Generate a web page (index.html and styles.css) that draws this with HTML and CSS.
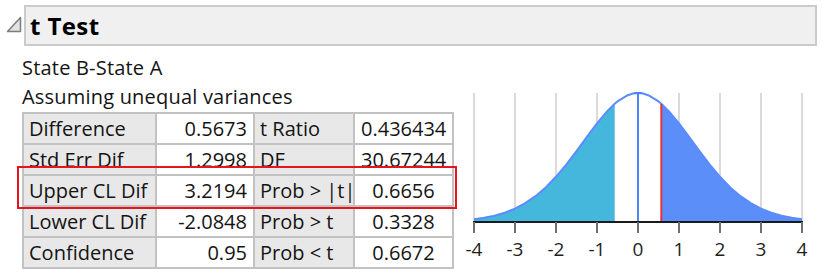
FILE: index.html
```html
<!DOCTYPE html>
<html>
<head>
<meta charset="utf-8">
<link rel="stylesheet" href="styles.css">
</head>
<body>
<div class="report">
  <div class="header">
    <svg class="disclosure" width="16" height="17" viewBox="0 0 16 17"><path d="M1.5 15.5 L14.5 1.5 L14.5 15.5 Z" fill="#e2e2e2" stroke="#7c7c7c" stroke-width="1.5" stroke-linejoin="round"/></svg>
    <div class="title-box"><span class="title">t Test</span></div>
  </div>
  <div class="content">
    <div class="left">
      <div class="line">State B-State A</div>
      <div class="line">Assuming unequal variances</div>
      <div class="table-wrap">
        <table class="stats">
          <colgroup><col class="c1"><col class="c2"><col class="c3"><col class="c4"></colgroup>
          <tr><td class="lab">Difference</td><td class="num">0.5673</td><td class="lab">t Ratio</td><td class="num2">0.436434</td></tr>
          <tr><td class="lab">Std Err Dif</td><td class="num">1.2998</td><td class="lab">DF</td><td class="num2">30.67244</td></tr>
          <tr><td class="lab">Upper CL Dif</td><td class="num">3.2194</td><td class="lab">Prob &gt; |t|</td><td class="num2">0.6656</td></tr>
          <tr><td class="lab">Lower CL Dif</td><td class="num">-2.0848</td><td class="lab">Prob &gt; t</td><td class="num2">0.3328</td></tr>
          <tr><td class="lab">Confidence</td><td class="num">0.95</td><td class="lab">Prob &lt; t</td><td class="num2">0.6672</td></tr>
        </table>
        <div class="highlight"></div>
      </div>
    </div>
    <svg class="chart" width="360" height="180" viewBox="460 85 360 180">
      <g stroke="#dadada" stroke-width="2">
        <line x1="474" y1="93" x2="474" y2="222"/>
        <line x1="515" y1="93" x2="515" y2="222"/>
        <line x1="556" y1="93" x2="556" y2="222"/>
        <line x1="597" y1="93" x2="597" y2="222"/>
        <line x1="638" y1="93" x2="638" y2="222"/>
        <line x1="679" y1="93" x2="679" y2="222"/>
        <line x1="720" y1="93" x2="720" y2="222"/>
        <line x1="761" y1="93" x2="761" y2="222"/>
        <line x1="802" y1="93" x2="802" y2="222"/>
      </g>
      <path fill="#45b7dd" d="M474,222 L474,219.2 L484.25,217.8 L494.5,215.7 L504.75,212.7 L515,208.7 L525.25,203.2 L535.5,196.2 L545.75,187.4 L556,176.8 L566.25,164.6 L576.5,151.1 L586.75,137.1 L597,123.4 L607.25,111.2 L614.7,103.7 L614.7,222 Z"/>
      <path fill="#5b8ef9" d="M661.3,222 L661.3,103.7 L668.75,111.2 L679,123.4 L689.25,137.1 L699.5,151.1 L709.75,164.6 L720,176.8 L730.25,187.4 L740.5,196.2 L750.75,203.2 L761,208.7 L771.25,212.7 L781.5,215.7 L791.75,217.8 L802,219.2 L802,222 Z"/>
      <polyline fill="none" stroke="#5b8cff" stroke-width="2" stroke-linejoin="round" points="474,219.2 484.25,217.8 494.5,215.7 504.75,212.7 515,208.7 525.25,203.2 535.5,196.2 545.75,187.4 556,176.8 566.25,164.6 576.5,151.1 586.75,137.1 597,123.4 607.25,111.2 614.7,103.7 617.5,101.4 627.75,95.2 632.9,93.5 638,93 643.1,93.5 648.25,95.2 658.5,101.4 661.3,103.7 668.75,111.2 679,123.4 689.25,137.1 699.5,151.1 709.75,164.6 720,176.8 730.25,187.4 740.5,196.2 750.75,203.2 761,208.7 771.25,212.7 781.5,215.7 791.75,217.8 802,219.2"/>
      <line x1="638" y1="93" x2="638" y2="222" stroke="#4f86f7" stroke-width="2"/>
      <line x1="634" y1="93" x2="642" y2="93" stroke="#4f86f7" stroke-width="2"/>
      <line x1="661.3" y1="104" x2="661.3" y2="222" stroke="#e8323c" stroke-width="2"/>
      <line x1="473" y1="222" x2="803" y2="222" stroke="#1a1a1a" stroke-width="2"/>
      <g stroke="#707070" stroke-width="2">
        <line x1="474" y1="222" x2="474" y2="233"/>
        <line x1="515" y1="222" x2="515" y2="233"/>
        <line x1="556" y1="222" x2="556" y2="233"/>
        <line x1="597" y1="222" x2="597" y2="233"/>
        <line x1="638" y1="222" x2="638" y2="233"/>
        <line x1="679" y1="222" x2="679" y2="233"/>
        <line x1="720" y1="222" x2="720" y2="233"/>
        <line x1="761" y1="222" x2="761" y2="233"/>
        <line x1="802" y1="222" x2="802" y2="233"/>
      </g>
      <g class="ticklabels" text-anchor="middle">
        <text x="474" y="256">-4</text>
        <text x="515" y="256">-3</text>
        <text x="556" y="256">-2</text>
        <text x="597" y="256">-1</text>
        <text x="638" y="256">0</text>
        <text x="679" y="256">1</text>
        <text x="720" y="256">2</text>
        <text x="761" y="256">3</text>
        <text x="802" y="256">4</text>
      </g>
    </svg>
  </div>
</div>
</body>
</html>
```

FILE: styles.css
```css
html, body {
  margin: 0;
  padding: 0;
  background: #ffffff;
}

body {
  font-family: "Open Sans", "Liberation Sans", sans-serif;
  font-size: 20px;
  color: #141414;
  width: 825px;
  height: 280px;
  overflow: hidden;
}

.header {
  display: flex;
  align-items: flex-start;
  padding: 5px 8px 0 6px;
}

.disclosure {
  flex: none;
  margin-top: 11px;
}

.title-box {
  flex: 1;
  margin-left: 2px;
  height: 41px;
  box-sizing: border-box;
  border: 2px solid #cbcbcb;
  background: #f0f0f0;
  padding-left: 4px;
  line-height: 37px;
}

.title {
  font-weight: 700;
  font-size: 24px;
  letter-spacing: 0.4px;
  color: #000;
}

.content {
  display: flex;
  align-items: flex-start;
  gap: 8px;
  padding-left: 22px;
}

.left {
  width: 430px;
  padding-top: 7px;
}

.line {
  line-height: 29px;
  letter-spacing: 0.2px;
  white-space: nowrap;
}

.table-wrap {
  position: relative;
  margin-top: 1px;
}

.stats {
  border-collapse: collapse;
  table-layout: fixed;
  width: 430px;
  border: 2px solid #a9a9a9;
}

.c1 { width: 133px; }
.c2 { width: 98px; }
.c3 { width: 100px; }
.c4 { width: 99px; }

.stats tr {
  height: 31px;
}

.stats td {
  border: 2px solid #c2c2c2;
  padding: 0 6px;
  line-height: 27px;
  white-space: nowrap;
  overflow: hidden;
}

.stats td.lab {
  background: #e8e8e8;
  text-align: left;
  padding-left: 5px;
}

.stats td.num {
  background: #ffffff;
  text-align: right;
}

.stats td.num2 {
  background: #ffffff;
  text-align: center;
}

.highlight {
  position: absolute;
  left: -5px;
  top: 54px;
  width: 440px;
  height: 43px;
  box-sizing: border-box;
  border: 2px solid #e8141c;
  pointer-events: none;
}

.chart {
  flex: none;
  margin-top: 39px;
  display: block;
}

.ticklabels text {
  font-family: "Open Sans", "Liberation Sans", sans-serif;
  font-size: 19px;
  fill: #1e1e1e;
}
```
